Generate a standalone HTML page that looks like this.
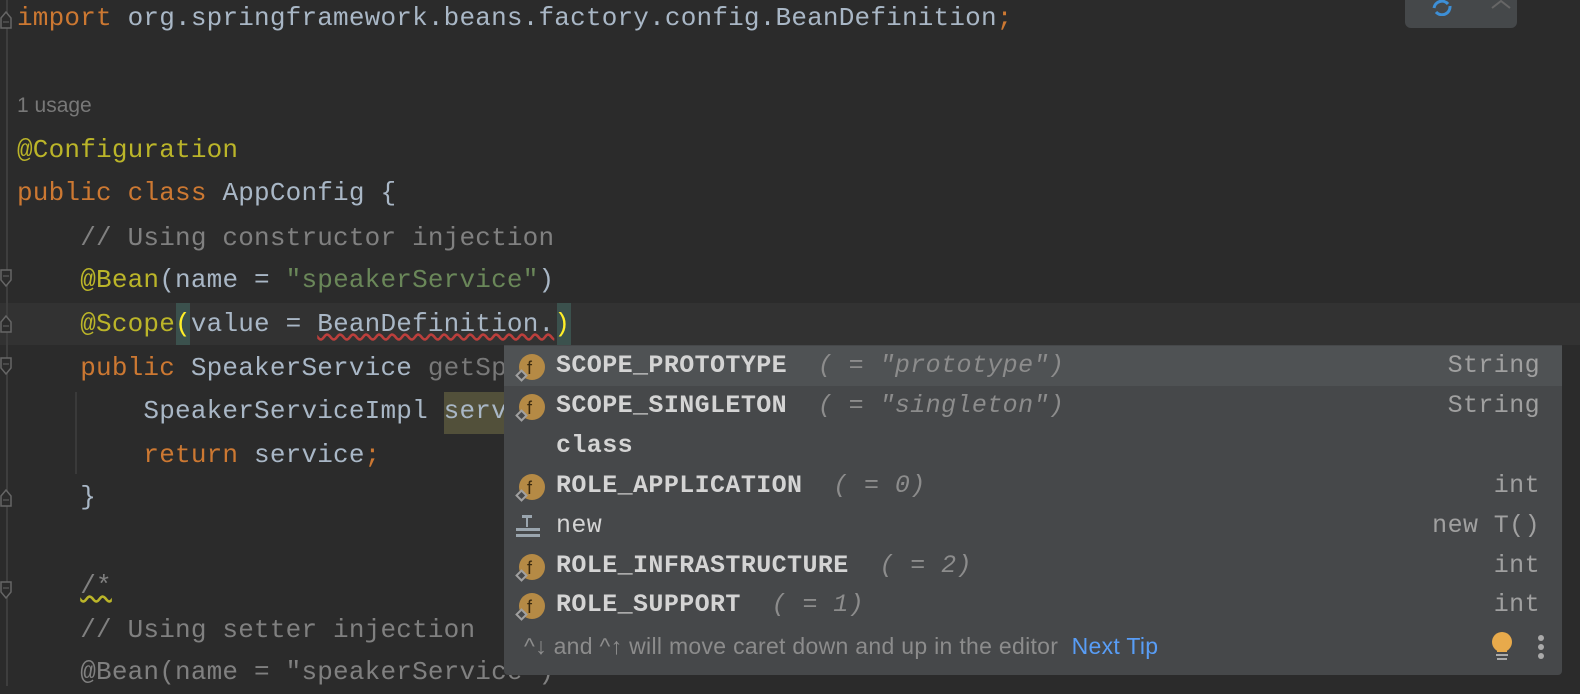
<!DOCTYPE html>
<html><head><style>
body{margin:0;width:1580px;height:686px;background:#2b2b2b;overflow:hidden;position:relative;font-family:"Liberation Mono",monospace;}
.l{position:absolute;left:17px;height:44px;line-height:44px;font-size:26px;letter-spacing:0.2px;white-space:pre;color:#a9b7c6;}
.k{color:#cc7832}.a{color:#bbb529}.s{color:#6a8759}.c{color:#808080}.g{color:#787878}
.cur{position:absolute;left:0;top:303px;width:1580px;height:42px;background:#323232}
.pop{position:absolute;left:504px;top:345px;width:1058px;height:330px;background:#46484a;border-radius:0 0 4px 4px;}
.r{position:absolute;left:0;width:1058px;height:40px;line-height:40px;font-size:25px;letter-spacing:0.4px;white-space:pre;}
.r .n{position:absolute;left:52px;color:#d4d4d4;font-weight:bold;}
.r .n i{font-weight:normal;color:#8c8c8c}
.r .t{position:absolute;right:22px;color:#a0a0a0;}
.ic{position:absolute;left:10px;top:4px;width:34px;height:34px}
.fold{position:absolute;left:0;width:12px;height:22px}
</style></head><body>
<div class="cur"></div>
<div style="position:absolute;top:0;height:686px;left:6px;width:2px;background:#3e3e3e"></div>
<svg class="fold" style="top:8px"><path d="M1 10l5-6 5 6v10H1z" fill="#2b2b2b" stroke="#666" stroke-width="1.5"/><path d="M3 14h6" stroke="#666"/></svg>
<svg class="fold" style="top:268px"><path d="M1 2h10v10l-5 6-5-6z" fill="#2b2b2b" stroke="#666" stroke-width="1.5"/><path d="M3 8h6" stroke="#666"/></svg>
<svg class="fold" style="top:312px"><path d="M1 10l5-6 5 6v10H1z" fill="#2b2b2b" stroke="#666" stroke-width="1.5"/><path d="M3 14h6" stroke="#666"/></svg>
<svg class="fold" style="top:356px"><path d="M1 2h10v10l-5 6-5-6z" fill="#2b2b2b" stroke="#666" stroke-width="1.5"/><path d="M3 8h6" stroke="#666"/></svg>
<svg class="fold" style="top:486px"><path d="M1 10l5-6 5 6v10H1z" fill="#2b2b2b" stroke="#666" stroke-width="1.5"/><path d="M3 14h6" stroke="#666"/></svg>
<svg class="fold" style="top:580px"><path d="M1 2h10v10l-5 6-5-6z" fill="#2b2b2b" stroke="#666" stroke-width="1.5"/><path d="M3 8h6" stroke="#666"/></svg>
<div style="position:absolute;left:75px;top:392px;width:2px;height:82px;background:#3a3a3a"></div>
<div style="position:absolute;left:176px;top:303px;width:14px;height:42px;background:#3b514d"></div>
<div style="position:absolute;left:557px;top:303px;width:14px;height:42px;background:#3b514d"></div>
<div style="position:absolute;left:444px;top:392px;width:60px;height:42px;background:#52503a"></div>
<div class="l" style="top:-4px"><span class="k">import </span>org.springframework.beans.factory.config.BeanDefinition<span class="k">;</span></div>
<div class="l" style="top:84px;font-family:'Liberation Sans',sans-serif;font-size:21px;color:#787878;letter-spacing:0">1 usage</div>
<div class="l a" style="top:128px">@Configuration</div>
<div class="l" style="top:171px"><span class="k">public class </span>AppConfig {</div>
<div class="l c" style="top:216px">    // Using constructor injection</div>
<div class="l" style="top:258px"><span class="a">    @Bean</span>(name = <span class="s">"speakerService"</span>)</div>
<div class="l" style="top:302px"><span class="a">    @Scope</span><span style="color:#ffef28">(</span>value = <span style="text-decoration:underline wavy #bc3f3c">BeanDefinition.</span><span style="color:#ffef28">)</span></div>
<div class="l" style="top:346px"><span class="k">    public </span>SpeakerService <span class="g">getSp</span></div>
<div class="l" style="top:389px">        SpeakerServiceImpl serv</div>
<div class="l" style="top:433px"><span class="k">        return </span>service<span class="k">;</span></div>
<div class="l" style="top:475px">    }</div>
<div class="l c" style="top:564px">    <span style="text-decoration:underline wavy #bbb529">/*</span></div>
<div class="l c" style="top:608px">    // Using setter injection</div>
<div class="l c" style="top:650px">    @Bean(name = "speakerService")</div>
<div style="position:absolute;left:1405px;top:-10px;width:112px;height:38px;background:#45484a;border-radius:6px"></div>
<svg style="position:absolute;left:1430px;top:0" width="24" height="16"><path d="M4 8a8 8 0 0 1 14-4M20 6a8 8 0 0 1-14 6" stroke="#3d8fd6" stroke-width="3" fill="none"/></svg>
<svg style="position:absolute;left:1490px;top:0" width="22" height="10"><path d="M2 8l9-7 9 7" stroke="#666" stroke-width="2" fill="none"/></svg>
<div class="pop">
<div class="r" style="top:1px;background:#4f5254"></div>
<div class="r" style="top:1px"><svg class="ic"><circle cx="18" cy="17" r="13" fill="#b58a45"/><text x="13" y="24" font-size="18" fill="#3a2a10" font-family="Liberation Sans">f</text><rect x="4" y="22" width="7" height="7" transform="rotate(45 7.5 25.5)" fill="#46484a" stroke="#a0a0a0" stroke-width="2"/></svg><span class="n">SCOPE_PROTOTYPE  <i>( = "prototype")</i></span><span class="t">String</span></div>
<div class="r" style="top:41px"><svg class="ic"><circle cx="18" cy="17" r="13" fill="#b58a45"/><text x="13" y="24" font-size="18" fill="#3a2a10" font-family="Liberation Sans">f</text><rect x="4" y="22" width="7" height="7" transform="rotate(45 7.5 25.5)" fill="#46484a" stroke="#a0a0a0" stroke-width="2"/></svg><span class="n">SCOPE_SINGLETON  <i>( = "singleton")</i></span><span class="t">String</span></div>
<div class="r" style="top:81px"><span class="n">class</span></div>
<div class="r" style="top:121px"><svg class="ic"><circle cx="18" cy="17" r="13" fill="#b58a45"/><text x="13" y="24" font-size="18" fill="#3a2a10" font-family="Liberation Sans">f</text><rect x="4" y="22" width="7" height="7" transform="rotate(45 7.5 25.5)" fill="#46484a" stroke="#a0a0a0" stroke-width="2"/></svg><span class="n">ROLE_APPLICATION  <i>( = 0)</i></span><span class="t">int</span></div>
<div class="r" style="top:161px"><svg class="ic"><rect x="8" y="5" width="10" height="3" fill="#9aa5ae"/><rect x="12" y="7" width="2" height="10" fill="#9aa5ae"/><rect x="2" y="18" width="24" height="3" fill="#9aa5ae"/><rect x="2" y="24" width="24" height="3" fill="#9aa5ae"/></svg><span class="n" style="font-weight:normal">new</span><span class="t">new T()</span></div>
<div class="r" style="top:201px"><svg class="ic"><circle cx="18" cy="17" r="13" fill="#b58a45"/><text x="13" y="24" font-size="18" fill="#3a2a10" font-family="Liberation Sans">f</text><rect x="4" y="22" width="7" height="7" transform="rotate(45 7.5 25.5)" fill="#46484a" stroke="#a0a0a0" stroke-width="2"/></svg><span class="n">ROLE_INFRASTRUCTURE  <i>( = 2)</i></span><span class="t">int</span></div>
<div class="r" style="top:240px"><svg class="ic"><circle cx="18" cy="17" r="13" fill="#b58a45"/><text x="13" y="24" font-size="18" fill="#3a2a10" font-family="Liberation Sans">f</text><rect x="4" y="22" width="7" height="7" transform="rotate(45 7.5 25.5)" fill="#46484a" stroke="#a0a0a0" stroke-width="2"/></svg><span class="n">ROLE_SUPPORT  <i>( = 1)</i></span><span class="t">int</span></div>
<div style="position:absolute;left:20px;top:288px;font-family:'Liberation Sans',sans-serif;font-size:23px;letter-spacing:0.3px;color:#8c8c8c;white-space:pre">^↓ and ^↑ will move caret down and up in the editor  <span style="color:#589df6">Next Tip</span></div>
<svg style="position:absolute;left:986px;top:287px" width="24" height="32"><circle cx="12" cy="10" r="10" fill="#e8aa4b"/><rect x="7" y="16" width="10" height="4" fill="#e8aa4b"/><rect x="6" y="22" width="12" height="2" fill="#aaa"/><rect x="7" y="26" width="10" height="2" fill="#aaa"/></svg>
<svg style="position:absolute;left:1032px;top:289px" width="10" height="28"><circle cx="5" cy="4" r="3" fill="#aaa"/><circle cx="5" cy="13" r="3" fill="#aaa"/><circle cx="5" cy="22" r="3" fill="#aaa"/></svg>
</div>
</body></html>
